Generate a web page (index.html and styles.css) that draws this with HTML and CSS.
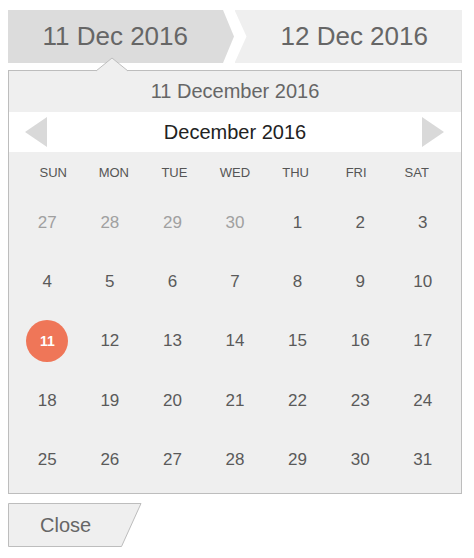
FILE: index.html
```html
<!DOCTYPE html>
<html>
<head>
<meta charset="utf-8">
<link rel="stylesheet" href="styles.css">
</head>
<body>
<div class="page">
  <div class="tabs">
    <div class="tab tab-start">11 Dec 2016</div>
    <div class="tab tab-end">12 Dec 2016</div>
  </div>
  <div class="picker">
    <svg class="notch" width="32" height="15" viewBox="0 0 32 15">
      <polygon points="0,14 16,1 32,14" fill="#efefef"/>
      <polyline points="0,14 16,1 32,14" fill="none" stroke="#bdbdbd" stroke-width="1"/>
    </svg>
    <div class="selected">11 December 2016</div>
    <div class="nav">
      <svg class="arrow" width="24" height="30" viewBox="0 0 24 30"><polygon points="22,0 22,30 0,15" fill="#d9d9d9"/></svg>
      <div class="month">December 2016</div>
      <svg class="arrow" width="24" height="30" viewBox="0 0 24 30"><polygon points="1,0 1,30 23,15" fill="#d9d9d9"/></svg>
    </div>
    <div class="weekdays">
      <span>SUN</span><span>MON</span><span>TUE</span><span>WED</span><span>THU</span><span>FRI</span><span>SAT</span>
    </div>
    <div class="days">
      <span class="day other">27</span><span class="day other">28</span><span class="day other">29</span><span class="day other">30</span><span class="day">1</span><span class="day">2</span><span class="day">3</span>
      <span class="day">4</span><span class="day">5</span><span class="day">6</span><span class="day">7</span><span class="day">8</span><span class="day">9</span><span class="day">10</span>
      <span class="day"><span class="today">11</span></span><span class="day">12</span><span class="day">13</span><span class="day">14</span><span class="day">15</span><span class="day">16</span><span class="day">17</span>
      <span class="day">18</span><span class="day">19</span><span class="day">20</span><span class="day">21</span><span class="day">22</span><span class="day">23</span><span class="day">24</span>
      <span class="day">25</span><span class="day">26</span><span class="day">27</span><span class="day">28</span><span class="day">29</span><span class="day">30</span><span class="day">31</span>
    </div>
  </div>
  <button class="close">
    <svg class="close-shape" width="134" height="44" viewBox="0 0 134 44">
      <polygon points="0.5,0.5 133,0.5 113.5,43.5 0.5,43.5" fill="#efefef" stroke="#bdbdbd" stroke-width="1"/>
    </svg>
    <span class="close-label">Close</span>
  </button>
</div>
</body>
</html>
```
FILE: styles.css
```css
* { box-sizing: border-box; }
html, body { margin: 0; padding: 0; background: #fff; }
body { font-family: "Liberation Sans", Arial, sans-serif; }
.page { padding: 10px 12px 0 8px; width: 474px; }

.tabs { display: flex; height: 53px; }
.tab {
  height: 53px;
  display: flex;
  align-items: center;
  justify-content: center;
  font-size: 26px;
  color: #666;
}
.tab-start {
  width: 226px;
  padding-right: 11px;
  background: #dcdcdc;
  clip-path: polygon(0 0, 215px 0, 226px 50%, 215px 100%, 0 100%);
}
.tab-end {
  width: 228px;
  margin-left: 1px;
  padding-left: 12px;
  background: #efefef;
  clip-path: polygon(0 0, 100% 0, 100% 100%, 0 100%, 12px 50%);
}

.picker {
  position: relative;
  margin-top: 7px;
  width: 454px;
  background: #efefef;
  border: 1px solid #bdbdbd;
  padding-bottom: 4px;
}
.notch { position: absolute; left: 87px; top: -14px; display: block; }

.selected {
  height: 41px;
  display: flex;
  align-items: center;
  justify-content: center;
  font-size: 20px;
  color: #666;
}
.nav {
  height: 40px;
  background: #fff;
  display: flex;
  align-items: center;
  justify-content: space-between;
  padding: 0 16px 0 16px;
}
.arrow { display: block; }
.month { font-size: 20px; color: #222; }

.weekdays {
  height: 41px;
  display: grid;
  grid-template-columns: repeat(7, 1fr);
  align-items: center;
  padding: 0 14px;
  font-size: 13px;
  color: #555;
  text-align: center;
}
.days {
  display: grid;
  grid-template-columns: repeat(7, 1fr);
  grid-auto-rows: 59.3px;
  padding: 0 7px;
}
.day {
  display: flex;
  align-items: center;
  justify-content: center;
  font-size: 17px;
  color: #5a5a5a;
}
.day.other { color: #a0a0a0; }
.today {
  width: 42px;
  height: 42px;
  border-radius: 50%;
  background: #ef7658;
  color: #fff;
  font-size: 14px;
  font-weight: bold;
  display: flex;
  align-items: center;
  justify-content: center;
}

.close {
  position: relative;
  margin-top: 9px;
  width: 134px;
  height: 44px;
  padding: 0;
  border: 0;
  background: transparent;
  font-family: inherit;
  display: flex;
  align-items: center;
}
.close-shape { position: absolute; left: 0; top: 0; display: block; }
.close-label {
  position: relative;
  margin-left: 32px;
  font-size: 20px;
  color: #666;
}
```
